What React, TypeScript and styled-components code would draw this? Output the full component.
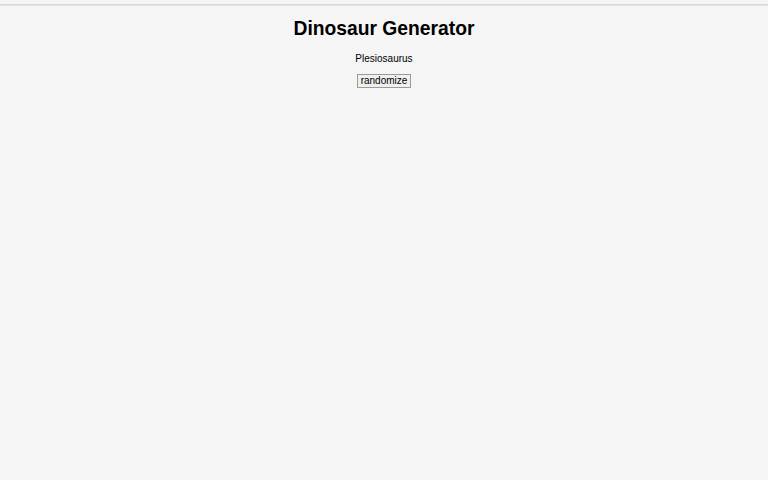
import React, { useState } from 'react';
import styled, { createGlobalStyle } from 'styled-components';

const GlobalStyle = createGlobalStyle`
  html, body {
    margin: 0;
    padding: 0;
    background: #f5f5f5;
    font-family: "Liberation Sans", Arial, sans-serif;
    color: #000;
  }
`;

const TopRule = styled.div`
  margin-top: 4px;
  height: 2px;
  background: linear-gradient(#d6d6d6, #e6e6e6);
`;

const Main = styled.main`
  display: flex;
  flex-direction: column;
  align-items: center;
`;

const Title = styled.h1`
  margin: 12px 0 0;
  font-size: 19.3px;
  line-height: 22px;
  font-weight: bold;
`;

const Name = styled.p`
  margin: 13px 0 0;
  font-size: 10px;
  line-height: 12px;
`;

const Button = styled.button`
  margin-top: 9px;
  padding: 1px 3px;
  font-family: "Liberation Sans", Arial, sans-serif;
  font-size: 10px;
  line-height: 10px;
  background: #efefef;
  border: 1px solid #9a9a9a;
  border-radius: 0;
  color: #000;
`;

const dinosaurs = ['Plesiosaurus', 'Triceratops', 'Stegosaurus', 'Velociraptor', 'Brachiosaurus'];

export default function App() {
  const [name, setName] = useState(dinosaurs[0]);

  const randomize = () => {
    setName(dinosaurs[Math.floor(Math.random() * dinosaurs.length)]);
  };

  return (
    <>
      <GlobalStyle />
      <TopRule />
      <Main>
        <Title>Dinosaur Generator</Title>
        <Name>{name}</Name>
        <Button onClick={randomize}>randomize</Button>
      </Main>
    </>
  );
}
